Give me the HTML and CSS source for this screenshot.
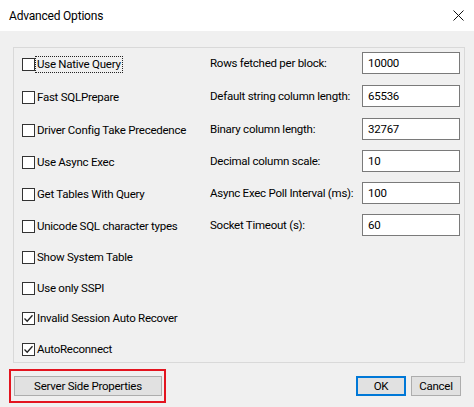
FILE: index.html
```html
<!DOCTYPE html>
<html>
<head>
<meta charset="utf-8">
<link rel="stylesheet" href="styles.css">
</head>
<body>
<div class="window">
  <div class="titlebar">
    <span class="title">Advanced Options</span>
    <svg class="close" width="11" height="11" viewBox="0 0 11 11"><path d="M0.5 0.5 L10.5 10.5 M10.5 0.5 L0.5 10.5" stroke="#111" stroke-width="1" fill="none"/></svg>
  </div>
  <div class="panel">
    <div class="grid">
      <label class="check r1"><span class="box"></span><span class="text focus">Use Native Query</span></label>
      <span class="flabel r1">Rows fetched per block:</span><span class="input r1">10000</span>

      <label class="check r2"><span class="box"></span><span class="text">Fast SQLPrepare</span></label>
      <span class="flabel r2">Default string column length:</span><span class="input r2">65536</span>

      <label class="check r3"><span class="box"></span><span class="text">Driver Config Take Precedence</span></label>
      <span class="flabel r3">Binary column length:</span><span class="input r3">32767</span>

      <label class="check r4"><span class="box"></span><span class="text">Use Async Exec</span></label>
      <span class="flabel r4">Decimal column scale:</span><span class="input r4">10</span>

      <label class="check r5"><span class="box"></span><span class="text">Get Tables With Query</span></label>
      <span class="flabel r5">Async Exec Poll Interval (ms):</span><span class="input r5">100</span>

      <label class="check r6"><span class="box"></span><span class="text">Unicode SQL character types</span></label>
      <span class="flabel r6">Socket Timeout (s):</span><span class="input r6">60</span>

      <label class="check r7"><span class="box"></span><span class="text">Show System Table</span></label>
      <label class="check r8"><span class="box"></span><span class="text">Use only SSPI</span></label>
      <label class="check r9"><span class="box checked"><svg width="11" height="11" viewBox="0 0 11 11"><path d="M1.5 5.5 L4.2 8.3 L9.5 2.2" stroke="#222" stroke-width="1.3" fill="none"/></svg></span><span class="text">Invalid Session Auto Recover</span></label>
      <label class="check r10"><span class="box checked"><svg width="11" height="11" viewBox="0 0 11 11"><path d="M1.5 5.5 L4.2 8.3 L9.5 2.2" stroke="#222" stroke-width="1.3" fill="none"/></svg></span><span class="text">AutoReconnect</span></label>
    </div>
  </div>
  <div class="footer">
    <div class="highlight">
      <button class="btn server">Server Side Properties</button>
    </div>
    <div class="actions">
      <button class="btn default">OK</button>
      <button class="btn">Cancel</button>
    </div>
  </div>
</div>
</body>
</html>
```

FILE: styles.css
```css
* { box-sizing: border-box; }
html, body {
  margin: 0;
  padding: 0;
}
body {
  width: 474px;
  height: 407px;
  background: #f0f0f0;
  font-family: Roboto, "Noto Sans", sans-serif;
  font-size: 11.5px;
  letter-spacing: -0.25px;
  color: #000;
  overflow: hidden;
}
.window {
  width: 474px;
  height: 407px;
  background: #f0f0f0;
}
.titlebar {
  height: 31px;
  background: #fff;
  display: flex;
  align-items: center;
  justify-content: space-between;
  padding: 0 10px 0 9px;
}
.title {
  font-size: 12px;
  letter-spacing: -0.2px;
  line-height: 16px;
}
.close {
  display: block;
  margin-top: -1px;
}
.panel {
  margin: 16px 0 0 13px;
  width: 452px;
  height: 316px;
  border: 1px solid #d9d9d9;
  padding: 5px 4px 2px 8px;
}
.grid {
  display: grid;
  grid-template-columns: 188px 152px 98px;
  grid-template-rows: 33px 33px 32px 32px 32px 31px 31px 30px 31px 22px;
}
.r1 { grid-row: 1; }
.r2 { grid-row: 2; }
.r3 { grid-row: 3; }
.r4 { grid-row: 4; }
.r5 { grid-row: 5; }
.r6 { grid-row: 6; }
.r7 { grid-row: 7; }
.r8 { grid-row: 8; }
.r9 { grid-row: 9; }
.r10 { grid-row: 10; }
.check {
  grid-column: 1;
  height: 22px;
  display: flex;
  align-items: center;
  white-space: nowrap;
}
.box {
  width: 13px;
  height: 13px;
  border: 1px solid #333;
  background: #fff;
  flex: none;
  display: flex;
  align-items: center;
  justify-content: center;
}
.box svg { display: block; }
.text {
  margin-left: 0;
  padding: 0 1px;
  line-height: 15px;
  border: 1px solid transparent;
}
.text.focus {
  border: 1px dotted #222;
}
.flabel {
  grid-column: 2;
  height: 22px;
  margin-top: -1px;
  display: flex;
  align-items: center;
  white-space: nowrap;
}
.input {
  grid-column: 3;
  height: 22px;
  margin-top: -1px;
  border: 1px solid #7a7a7a;
  background: #fff;
  padding: 0 5px;
  display: flex;
  align-items: center;
}
.footer {
  display: flex;
  justify-content: space-between;
  align-items: flex-start;
  padding: 6px 13px 0 9px;
}
.highlight {
  border: 2px solid #e3141f;
  padding: 5px 2px 5px 3px;
}
.actions {
  display: flex;
  gap: 5px;
  margin-top: 7px;
}
.btn {
  font-family: Roboto, "Noto Sans", sans-serif;
  font-size: 11.5px;
  letter-spacing: -0.25px;
  color: #000;
  height: 20px;
  width: 50px;
  padding: 0;
  background: #e1e1e1;
  border: 1px solid #adadad;
  border-radius: 0;
  line-height: 16px;
}
.btn.server {
  width: 148px;
  display: block;
}
.btn.default {
  border: 2px solid #0078d7;
  width: 50px;
}
```
